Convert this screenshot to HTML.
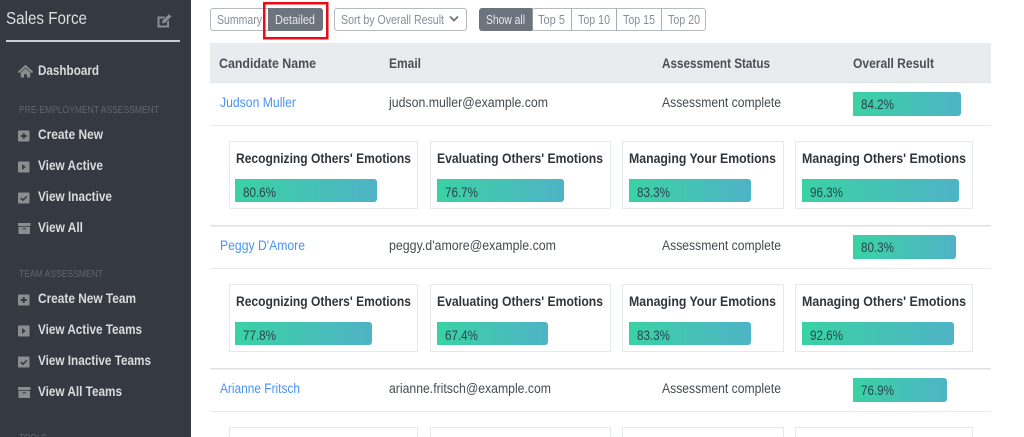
<!DOCTYPE html>
<html lang="en"><head><meta charset="utf-8"><title>Sales Force</title>
<style>
html,body{margin:0;padding:0;background:#fff;width:1024px;height:437px;overflow:hidden}
svg{display:block}
text{font-family:"Liberation Sans",Arial,sans-serif}
.side{font-size:13.5px;font-weight:bold;fill:#d9dbdd}
.sec{font-size:10.500px;fill:#5f666e}
.th{font-size:13.500px;font-weight:bold;fill:#495057}
.td{font-size:13.500px;fill:#454b51}
.lnk{font-size:13.500px;fill:#4a94f0}
.ct{font-size:13.500px;font-weight:bold;fill:#2f353a}
.bt{font-size:13.500px;fill:#28454a}
.btn{font-size:12.500px;fill:#868e96}
.on{font-size:12.500px;fill:#e6e8ea}
</style></head><body>
<svg width="1024" height="437" viewBox="0 0 1024 437" xmlns="http://www.w3.org/2000/svg">
<defs>
<linearGradient id="g" x1="0" y1="0" x2="1" y2="0"><stop offset="0" stop-color="#3ad2a4"/><stop offset="1" stop-color="#4fb3c6"/></linearGradient>
<g id="plus"><rect width="11.500" height="11" rx="1" fill="#8b8e91"/><path d="M5.750 2.500v6M2.700 5.500h6.100" stroke="#343a42" stroke-width="1.900"/></g>
<g id="play"><rect width="11.500" height="11" rx="1" fill="#8b8e91"/><path d="M4.200 2.500l3.500 3-3.500 3z" fill="#343a42"/></g>
<g id="check"><rect width="11.500" height="11" rx="1" fill="#8b8e91"/><path d="M2.700 5.500l2.200 2.200 3.900-3.800" stroke="#343a42" stroke-width="1.500" fill="none"/></g>
<g id="arch"><rect x="-.5" y="0" width="12.500" height="3" fill="#8b8e91"/><rect x="0" y="3.800" width="11.500" height="7.200" fill="#8b8e91"/><path d="M4 5.800h3.500" stroke="#343a42" stroke-width="1"/></g>
</defs>

<!-- sidebar -->
<rect width="191" height="437" fill="#353a42"/>
<text x="6" y="24" font-size="17.500" fill="#dcdee0" textLength="81" lengthAdjust="spacingAndGlyphs">Sales Force</text>
<path d="M157.500 16.500h8l-2 2h-4v7h7.500v-3.500l2-2v7.500h-11.500z" fill="#8b8e91"/>
<path d="M162 23.500l.6-3 6.400-6.400 2.400 2.400-6.400 6.400z" fill="#8b8e91"/>

<rect x="6" y="40" width="174" height="2" fill="#c9ced3"/>

<path d="M18.500 72.500l7-6.500 7 6.500" fill="none" stroke="#8b8e91" stroke-width="1.900"/>
<path d="M20.800 72.500l4.700-4.200 4.700 4.200v5h-3.200v-3.200h-3v3.200h-3.200z" fill="#8b8e91"/>
<text class="side" x="38" y="75" textLength="61" lengthAdjust="spacingAndGlyphs">Dashboard</text>

<text class="sec" x="19" y="113" textLength="140" lengthAdjust="spacingAndGlyphs">PRE-EMPLOYMENT ASSESSMENT</text>
<use href="#plus" x="18" y="130.500"/><text class="side" x="38" y="139" textLength="65" lengthAdjust="spacingAndGlyphs">Create New</text>
<use href="#play" x="18" y="161.500"/><text class="side" x="38" y="170" textLength="65" lengthAdjust="spacingAndGlyphs">View Active</text>
<use href="#check" x="18" y="192.500"/><text class="side" x="38" y="201" textLength="74" lengthAdjust="spacingAndGlyphs">View Inactive</text>
<use href="#arch" x="18.500" y="223"/><text class="side" x="38" y="232" textLength="45" lengthAdjust="spacingAndGlyphs">View All</text>

<text class="sec" x="19" y="277" textLength="84" lengthAdjust="spacingAndGlyphs">TEAM ASSESSMENT</text>
<use href="#plus" x="18" y="294.500"/><text class="side" x="38" y="303" textLength="98" lengthAdjust="spacingAndGlyphs">Create New Team</text>
<use href="#play" x="18" y="325.500"/><text class="side" x="38" y="334" textLength="104" lengthAdjust="spacingAndGlyphs">View Active Teams</text>
<use href="#check" x="18" y="356.500"/><text class="side" x="38" y="365" textLength="113" lengthAdjust="spacingAndGlyphs">View Inactive Teams</text>
<use href="#arch" x="18.500" y="387"/><text class="side" x="38" y="396" textLength="84" lengthAdjust="spacingAndGlyphs">View All Teams</text>
<text class="sec" x="19" y="441" textLength="28" lengthAdjust="spacingAndGlyphs">TOOLS</text>

<!-- toolbar -->
<rect x="210.500" y="8.500" width="112" height="22" rx="2.500" fill="#fff" stroke="#b4bac0"/>
<path d="M268 8h52a3 3 0 0 1 3 3v17a3 3 0 0 1-3 3h-52z" fill="#6c757d"/>
<text class="btn" x="217" y="24" textLength="45" lengthAdjust="spacingAndGlyphs">Summary</text>
<text class="on" x="275" y="24" textLength="40" lengthAdjust="spacingAndGlyphs">Detailed</text>
<rect x="264.250" y="3.250" width="63" height="35" fill="none" stroke="#ee0a14" stroke-width="2.500"/>

<rect x="334.500" y="8.500" width="132" height="22" rx="2.500" fill="#fff" stroke="#b4bac0"/>
<text class="btn" x="341" y="24" textLength="103" lengthAdjust="spacingAndGlyphs">Sort by Overall Result</text>
<path d="M450 16.500l4 4 4-4" fill="none" stroke="#6c757d" stroke-width="1.800"/>

<rect x="532.500" y="8.500" width="173" height="22" rx="2.500" fill="#fff" stroke="#b4bac0"/>
<path d="M482 8h50.500v23h-50.500a3 3 0 0 1-3-3v-17a3 3 0 0 1 3-3z" fill="#6c757d"/>
<path d="M571.500 8v23M616.500 8v23M661.500 8v23" stroke="#a5acb2"/>
<text class="on" x="486" y="24" textLength="39" lengthAdjust="spacingAndGlyphs">Show all</text>
<text class="btn" x="538" y="24" textLength="27" lengthAdjust="spacingAndGlyphs">Top 5</text>
<text class="btn" x="578" y="24" textLength="32" lengthAdjust="spacingAndGlyphs">Top 10</text>
<text class="btn" x="623" y="24" textLength="32" lengthAdjust="spacingAndGlyphs">Top 15</text>
<text class="btn" x="668" y="24" textLength="32" lengthAdjust="spacingAndGlyphs">Top 20</text>

<!-- table head -->
<rect x="210" y="43" width="781" height="40" fill="#e9ecef"/>
<rect x="210" y="82" width="781" height="1" fill="#e2e5e8"/>
<text class="th" x="219" y="68" textLength="97" lengthAdjust="spacingAndGlyphs">Candidate Name</text>
<text class="th" x="389" y="68" textLength="32" lengthAdjust="spacingAndGlyphs">Email</text>
<text class="th" x="662" y="68" textLength="108" lengthAdjust="spacingAndGlyphs">Assessment Status</text>
<text class="th" x="853" y="68" textLength="81" lengthAdjust="spacingAndGlyphs">Overall Result</text>

<!-- row 1 -->
<text class="lnk" x="220" y="107" textLength="76" lengthAdjust="spacingAndGlyphs">Judson Muller</text>
<text class="td" x="389" y="107" textLength="159" lengthAdjust="spacingAndGlyphs">judson.muller@example.com</text>
<text class="td" x="662" y="107" textLength="119" lengthAdjust="spacingAndGlyphs">Assessment complete</text>
<path d="M853 92h105a3 3 0 0 1 3 3v18a3 3 0 0 1-3 3h-105z" fill="url(#g)"/>
<text class="bt" x="861" y="109" textLength="33" lengthAdjust="spacingAndGlyphs">84.2%</text>
<rect x="210" y="125" width="781" height="1" fill="#e6e8eb"/>

<g fill="#fff" stroke="#e6e9ec">
<rect x="229.500" y="141.500" width="188" height="67"/><rect x="430.500" y="141.500" width="180" height="67"/><rect x="622.500" y="141.500" width="161" height="67"/><rect x="795.500" y="141.500" width="177" height="67"/>
</g>
<text class="ct" x="236" y="163" textLength="175" lengthAdjust="spacingAndGlyphs">Recognizing Others' Emotions</text>
<text class="ct" x="437" y="163" textLength="166" lengthAdjust="spacingAndGlyphs">Evaluating Others' Emotions</text>
<text class="ct" x="629" y="163" textLength="147" lengthAdjust="spacingAndGlyphs">Managing Your Emotions</text>
<text class="ct" x="802" y="163" textLength="164" lengthAdjust="spacingAndGlyphs">Managing Others' Emotions</text>
<path d="M235 179h139a3 3 0 0 1 3 3v17a3 3 0 0 1-3 3h-139z" fill="url(#g)"/>
<path d="M437 179h124a3 3 0 0 1 3 3v17a3 3 0 0 1-3 3h-124z" fill="url(#g)"/>
<path d="M629 179h119a3 3 0 0 1 3 3v17a3 3 0 0 1-3 3h-119z" fill="url(#g)"/>
<path d="M802 179h154a3 3 0 0 1 3 3v17a3 3 0 0 1-3 3h-154z" fill="url(#g)"/>
<text class="bt" x="243" y="197" textLength="33" lengthAdjust="spacingAndGlyphs">80.6%</text>
<text class="bt" x="445" y="197" textLength="33" lengthAdjust="spacingAndGlyphs">76.7%</text>
<text class="bt" x="637" y="197" textLength="33" lengthAdjust="spacingAndGlyphs">83.3%</text>
<text class="bt" x="810" y="197" textLength="33" lengthAdjust="spacingAndGlyphs">96.3%</text>
<rect x="210" y="225" width="781" height="1.500" fill="#dde1e5"/>

<!-- row 2 -->
<text class="lnk" x="220" y="250" textLength="85" lengthAdjust="spacingAndGlyphs">Peggy D'Amore</text>
<text class="td" x="389" y="250" textLength="167" lengthAdjust="spacingAndGlyphs">peggy.d'amore@example.com</text>
<text class="td" x="662" y="250" textLength="119" lengthAdjust="spacingAndGlyphs">Assessment complete</text>
<path d="M853 235h100a3 3 0 0 1 3 3v18a3 3 0 0 1-3 3h-100z" fill="url(#g)"/>
<text class="bt" x="861" y="252" textLength="33" lengthAdjust="spacingAndGlyphs">80.3%</text>
<rect x="210" y="268" width="781" height="1" fill="#e6e8eb"/>

<g fill="#fff" stroke="#e6e9ec">
<rect x="229.500" y="284.500" width="188" height="67"/><rect x="430.500" y="284.500" width="180" height="67"/><rect x="622.500" y="284.500" width="161" height="67"/><rect x="795.500" y="284.500" width="177" height="67"/>
</g>
<text class="ct" x="236" y="306" textLength="175" lengthAdjust="spacingAndGlyphs">Recognizing Others' Emotions</text>
<text class="ct" x="437" y="306" textLength="166" lengthAdjust="spacingAndGlyphs">Evaluating Others' Emotions</text>
<text class="ct" x="629" y="306" textLength="147" lengthAdjust="spacingAndGlyphs">Managing Your Emotions</text>
<text class="ct" x="802" y="306" textLength="164" lengthAdjust="spacingAndGlyphs">Managing Others' Emotions</text>
<path d="M235 322h134a3 3 0 0 1 3 3v17a3 3 0 0 1-3 3h-134z" fill="url(#g)"/>
<path d="M437 322h108a3 3 0 0 1 3 3v17a3 3 0 0 1-3 3h-108z" fill="url(#g)"/>
<path d="M629 322h119a3 3 0 0 1 3 3v17a3 3 0 0 1-3 3h-119z" fill="url(#g)"/>
<path d="M802 322h149a3 3 0 0 1 3 3v17a3 3 0 0 1-3 3h-149z" fill="url(#g)"/>
<text class="bt" x="243" y="340" textLength="33" lengthAdjust="spacingAndGlyphs">77.8%</text>
<text class="bt" x="445" y="340" textLength="33" lengthAdjust="spacingAndGlyphs">67.4%</text>
<text class="bt" x="637" y="340" textLength="33" lengthAdjust="spacingAndGlyphs">83.3%</text>
<text class="bt" x="810" y="340" textLength="33" lengthAdjust="spacingAndGlyphs">92.6%</text>
<rect x="210" y="368" width="781" height="1.500" fill="#dde1e5"/>

<!-- row 3 -->
<text class="lnk" x="220" y="393" textLength="80" lengthAdjust="spacingAndGlyphs">Arianne Fritsch</text>
<text class="td" x="389" y="393" textLength="162" lengthAdjust="spacingAndGlyphs">arianne.fritsch@example.com</text>
<text class="td" x="662" y="393" textLength="119" lengthAdjust="spacingAndGlyphs">Assessment complete</text>
<path d="M853 378h91a3 3 0 0 1 3 3v18a3 3 0 0 1-3 3h-91z" fill="url(#g)"/>
<text class="bt" x="861" y="395" textLength="33" lengthAdjust="spacingAndGlyphs">76.9%</text>
<rect x="210" y="411" width="781" height="1" fill="#e6e8eb"/>

<path d="M229.500 437v-9.500h188v9.500M430.500 437v-9.500h180v9.500M622.500 437v-9.500h161v9.500M795.500 437v-9.500h177v9.500" fill="none" stroke="#e6e9ec"/>
</svg>
</body></html>
